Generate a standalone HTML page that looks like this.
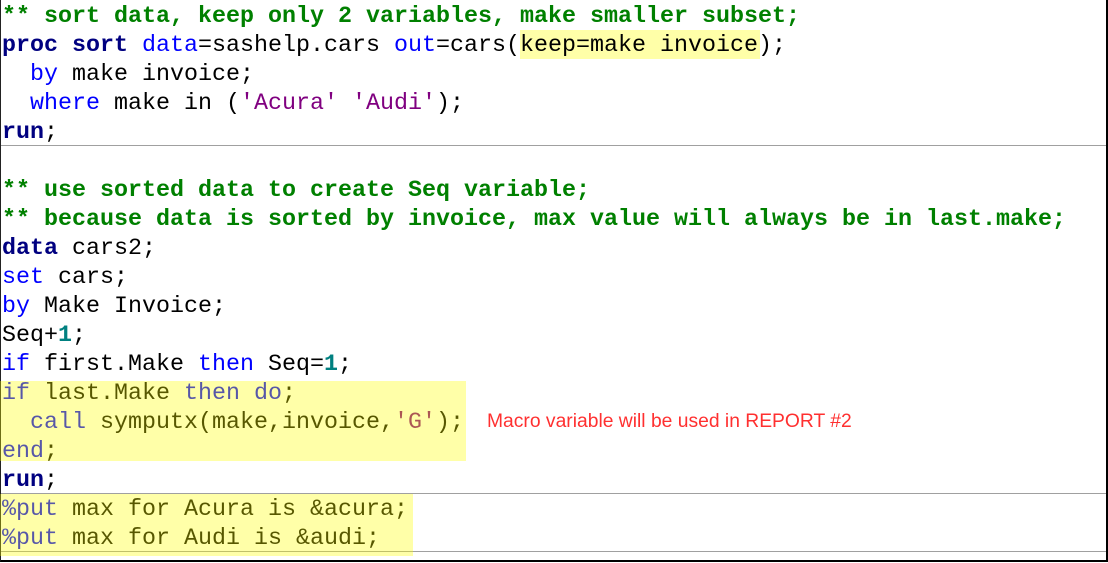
<!DOCTYPE html>
<html><head><style>
body{margin:0;width:1108px;height:563px;background:#fff;overflow:hidden;position:relative}
.frame{position:absolute;left:0;top:0;width:1105px;height:560px;border-left:1px solid #222;border-right:2px solid #000;border-bottom:2px solid #000}
.l{position:absolute;left:2px;font-family:"Liberation Mono",monospace;font-size:23.33px;line-height:29px;height:29px;white-space:pre;color:#000}
.c{color:#008000;font-weight:bold}
.k{color:#000080;font-weight:bold}
.b{color:#0000ff}
.s{color:#800080}
.n{color:#008080;font-weight:bold}
.hl{position:absolute;background:rgba(255,255,0,0.34);z-index:2}
.hl0{position:absolute;background:#ffffa8}
.sep{position:absolute;left:1px;width:1105px;height:1px;background:#a0a0a0}
.note{position:absolute;left:487px;top:411px;font-family:"Liberation Sans",sans-serif;font-size:19.3px;color:#ff3030}
</style></head><body>
<div class="hl0" style="left:520px;top:30px;width:240px;height:29px"></div>
<div class="hl" style="left:0;top:381px;width:466px;height:80px"></div>
<div class="hl" style="left:0;top:494px;width:413px;height:62px"></div>
<div class="sep" style="top:145px"></div>
<div class="sep" style="top:493px"></div>
<div class="sep" style="top:551px"></div>
<div class="l" style="top:3px"><span class="c">** sort data, keep only 2 variables, make smaller subset;</span></div>
<div class="l" style="top:32px"><span class="k">proc sort</span> <span class="b">data</span>=sashelp.cars <span class="b">out</span>=cars(keep=make invoice);</div>
<div class="l" style="top:61px">  <span class="b">by</span> make invoice;</div>
<div class="l" style="top:90px">  <span class="b">where</span> make in (<span class="s">'Acura'</span> <span class="s">'Audi'</span>);</div>
<div class="l" style="top:119px"><span class="k">run</span>;</div>
<div class="l" style="top:177px"><span class="c">** use sorted data to create Seq variable;</span></div>
<div class="l" style="top:206px"><span class="c">** because data is sorted by invoice, max value will always be in last.make;</span></div>
<div class="l" style="top:235px"><span class="k">data</span> cars2;</div>
<div class="l" style="top:264px"><span class="b">set</span> cars;</div>
<div class="l" style="top:293px"><span class="b">by</span> Make Invoice;</div>
<div class="l" style="top:322px">Seq+<span class="n">1</span>;</div>
<div class="l" style="top:351px"><span class="b">if</span> first.Make <span class="b">then</span> Seq=<span class="n">1</span>;</div>
<div class="l" style="top:380px"><span class="b">if</span> last.Make <span class="b">then</span> <span class="b">do</span>;</div>
<div class="l" style="top:409px">  <span class="b">call</span> symputx(make,invoice,<span class="s">'G'</span>);</div>
<div class="l" style="top:438px"><span class="b">end</span>;</div>
<div class="l" style="top:467px"><span class="k">run</span>;</div>
<div class="l" style="top:496px"><span class="b">%put</span> max for Acura is &amp;acura;</div>
<div class="l" style="top:525px"><span class="b">%put</span> max for Audi is &amp;audi;</div>
<div class="note">Macro variable will be used in REPORT #2</div>
<div class="frame"></div>
</body></html>
